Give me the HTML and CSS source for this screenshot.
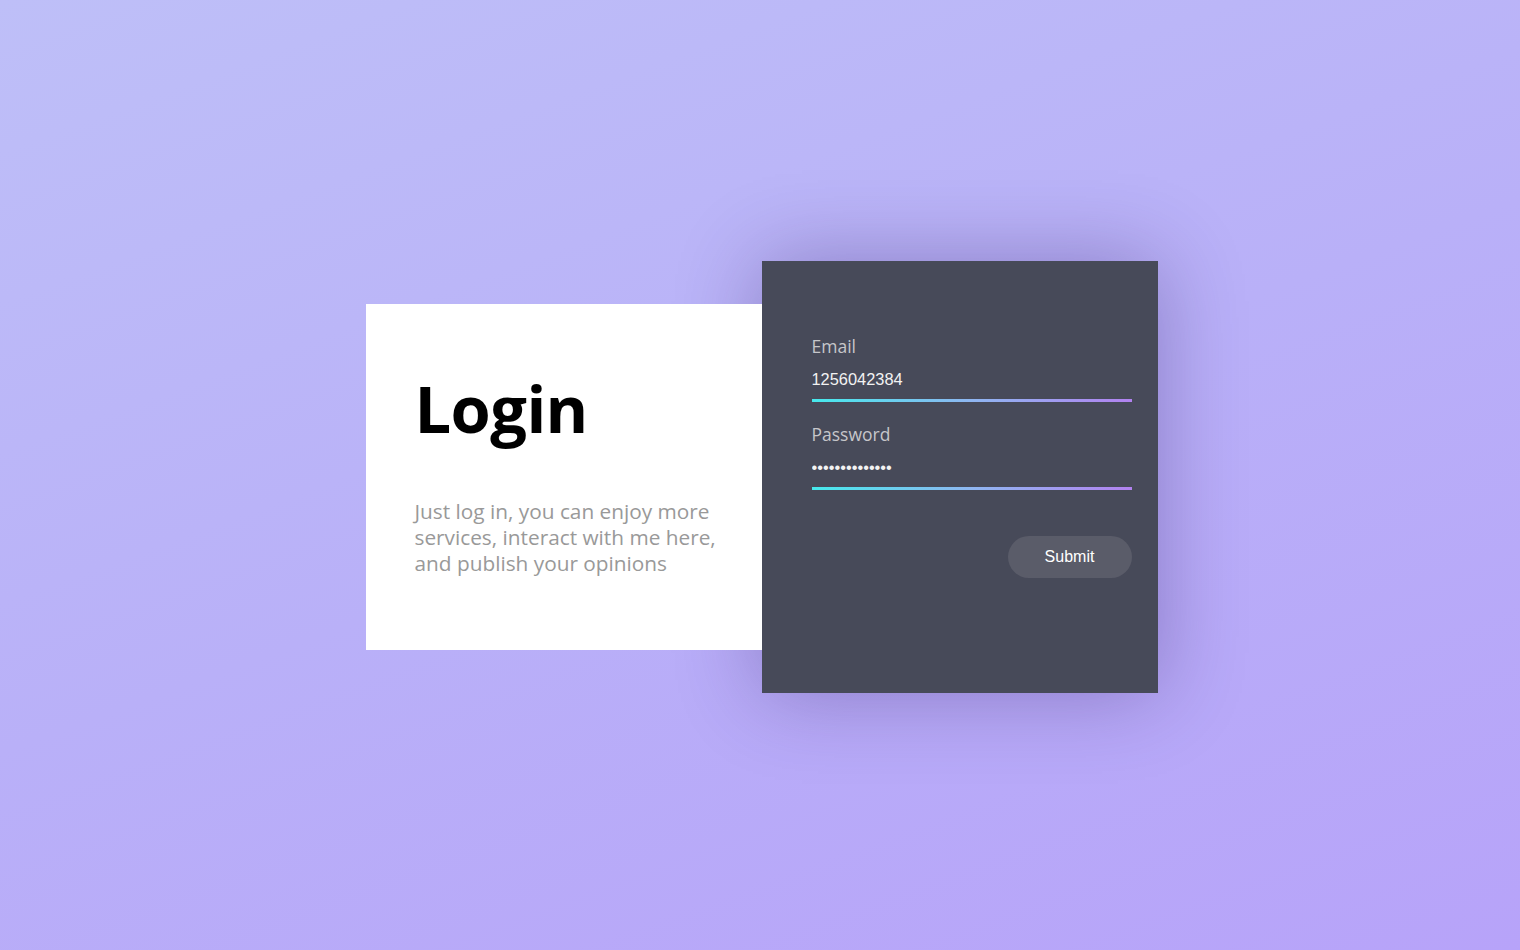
FILE: index.html
```html
<!DOCTYPE html>
<html lang="en">
<head>
<meta charset="utf-8">
<title>Login</title>
<link rel="stylesheet" href="styles.css">
</head>
<body>
<main class="stage">
  <section class="intro">
    <h1 class="intro-title">Login</h1>
    <p class="intro-text">Just log in, you can enjoy more services, interact with me here, and publish your opinions</p>
  </section>
  <section class="panel">
    <form class="form">
      <label class="field">
        <span class="field-label">Email</span>
        <input class="field-input" type="text" value="1256042384">
        <span class="field-line"></span>
      </label>
      <label class="field">
        <span class="field-label">Password</span>
        <input class="field-input" type="password" value="12345678901234">
        <span class="field-line"></span>
      </label>
      <div class="actions">
        <button class="submit" type="button">Submit</button>
      </div>
    </form>
  </section>
</main>
</body>
</html>
```

FILE: styles.css
```css
html, body {
  margin: 0;
  height: 100%;
}

body {
  background: linear-gradient(160deg, #bebff8 0%, #b9b0f8 50%, #b7a3f9 100%);
  font-family: "Open Sans", "Noto Sans", sans-serif;
}

.stage {
  height: 100vh;
  display: flex;
  align-items: center;
  justify-content: center;
  padding: 4px 0 0 3px;
  box-sizing: border-box;
}

.intro {
  position: relative;
  z-index: 1;
  width: 396px;
  height: 346px;
  box-sizing: border-box;
  background: #fff;
  padding: 64px 40px 0 49px;
}

.intro-title {
  margin: 0;
  font-size: 65px;
  line-height: 80px;
  font-weight: 700;
  color: #000;
  letter-spacing: -0.6px;
}

.intro-text {
  margin: 50px 0 0;
  font-size: 20.8px;
  line-height: 26px;
  color: #999;
}

.panel {
  width: 396px;
  height: 432px;
  box-sizing: border-box;
  background: #474a59;
  box-shadow: 0 0 80px rgba(40, 20, 90, 0.32);
  padding: 73px 26px 0 50px;
}

.form {
  display: flex;
  flex-direction: column;
}

.field {
  display: flex;
  flex-direction: column;
  margin-bottom: 20px;
}

.field-label {
  font-size: 17.5px;
  line-height: 24px;
  color: #c6c6ca;
}

.field-input {
  height: 39px;
  padding: 2px 0 0;
  margin: 0;
  border: none;
  outline: none;
  background: transparent;
  color: #f2f2f2;
  font-family: "Liberation Sans", Arial, sans-serif;
  font-size: 16.4px;
}

.field-line {
  display: block;
  height: 3px;
  background: linear-gradient(90deg, #46e9ec 0%, #8fb6f1 50%, #b282f0 100%);
}

.actions {
  display: flex;
  justify-content: flex-end;
  margin-top: 26px;
}

.submit {
  width: 124px;
  height: 42px;
  border: none;
  border-radius: 21px;
  background: #5a5c69;
  color: #fff;
  font-family: "Liberation Sans", Arial, sans-serif;
  font-size: 16px;
  cursor: pointer;
}
```
